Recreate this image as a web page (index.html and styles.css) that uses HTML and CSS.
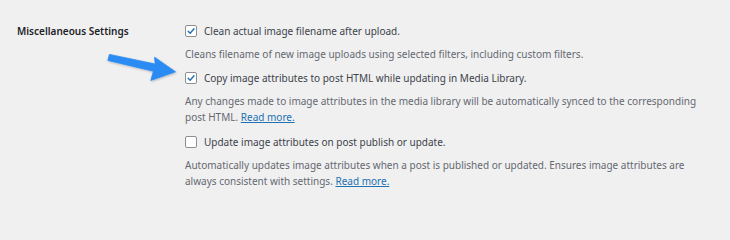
FILE: index.html
```html
<!DOCTYPE html>
<html lang="en">
<head>
<meta charset="utf-8">
<title>Miscellaneous Settings</title>
<link rel="stylesheet" href="styles.css">
</head>
<body>
<div class="page">
  <div class="form-row">
    <div class="row-label">Miscellaneous Settings</div>
    <div class="row-field">
      <div class="option">
        <label class="cb-line"><span class="cb"><svg viewBox="0 0 12 12" class="tick"><path d="M2.6 6.2 L5 8.6 L9.6 3.2" /></svg></span>Clean actual image filename after upload.</label>
        <p class="desc">Cleans filename of new image uploads using selected filters, including custom filters.</p>
      </div>
      <div class="option">
        <label class="cb-line"><span class="cb"><svg viewBox="0 0 12 12" class="tick"><path d="M2.6 6.2 L5 8.6 L9.6 3.2" /></svg></span>Copy image attributes to post HTML while updating in Media Library.</label>
        <p class="desc">Any changes made to image attributes in the media library will be automatically synced to the corresponding post HTML. <a href="#">Read more.</a></p>
      </div>
      <div class="option">
        <label class="cb-line"><span class="cb"></span>Update image attributes on post publish or update.</label>
        <p class="desc">Automatically updates image attributes when a post is published or updated. Ensures image attributes are always consistent with settings. <a href="#">Read more.</a></p>
      </div>
    </div>
  </div>
</div>
<svg class="arrow" width="90" height="40" viewBox="0 0 90 40">
  <defs>
    <filter id="sh" x="-20%" y="-40%" width="140%" height="180%">
      <feDropShadow dx="0.6" dy="1" stdDeviation="0.8" flood-color="#000" flood-opacity="0.25"/>
    </filter>
  </defs>
  <path filter="url(#sh)" fill="#2a8cf2" stroke="#2a8cf2" stroke-width="0.8" stroke-linejoin="round" d="M8.4 6.4 L9.4 2.4 L55.2 12 L54.6 5.2 L75.5 19.8 L50.8 28.4 L53.4 19.2 L7.8 8.4 Z"/>
</svg>
</body>
</html>
```

FILE: styles.css
```css
html, body {
  margin: 0;
  padding: 0;
  background: #f0f0f1;
}

body {
  font-family: "Noto Sans", "Open Sans", sans-serif;
  font-size: 10px;
  line-height: 16px;
  color: #3c434a;
  position: relative;
  width: 730px;
  height: 214px;
  overflow: hidden;
}

.page {
  padding-top: 23px;
}

.form-row {
  display: flex;
}

.row-label {
  width: 185px;
  padding-left: 17px;
  box-sizing: border-box;
  flex: none;
  font-weight: 600;
  color: #1d2327;
}

.row-field {
  width: 530px;
  display: flex;
  flex-direction: column;
}

.cb-line {
  display: flex;
  align-items: center;
  gap: 7px;
  color: #3c434a;
}

.cb {
  width: 12px;
  height: 12px;
  box-sizing: border-box;
  border: 1px solid #8c8f94;
  border-radius: 2px;
  background: #fff;
  flex: none;
  display: flex;
}

.tick {
  width: 10px;
  height: 10px;
  fill: none;
  stroke: #2271b1;
  stroke-width: 1.7;
  stroke-linecap: round;
  stroke-linejoin: round;
}

.desc {
  margin: 7px 0 8px;
  color: #646970;
}

.option:last-child .cb-line {
  margin-top: 1px;
}

.desc a {
  color: #2271b1;
  text-decoration: underline;
}

.arrow {
  position: absolute;
  left: 100px;
  top: 52px;
}
```
